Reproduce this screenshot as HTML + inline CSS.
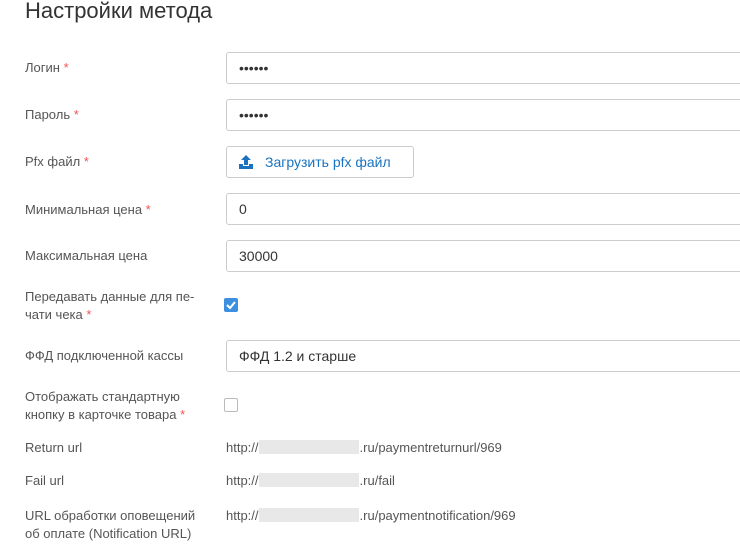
<!DOCTYPE html><html><head><meta charset="utf-8"><style>
body{margin:0;width:740px;height:556px;background:#fff;font-family:"Liberation Sans",sans-serif;position:relative;overflow:hidden}
.a{position:absolute}
h1{position:absolute;left:25px;top:-2px;margin:0;font-weight:normal;font-size:22px;color:#333}
.l{position:absolute;left:25px;font-size:13px;color:#555;line-height:18px}
.s{color:#e55}
.in{position:absolute;left:226px;width:530px;height:30px;border:1px solid #ccc;border-radius:3px;box-sizing:border-box;height:32px;font-size:14px;color:#333;padding-left:12px;line-height:30px}
.u{position:absolute;left:226px;font-size:13px;color:#555}
.b{display:inline-block;width:100px;height:14px;background:#e8e8e8;vertical-align:-2px;margin-right:1px}
</style></head><body>
<h1>Настройки метода</h1>
<div class="l" style="top:59px">Логин <span class="s">*</span></div>
<div class="in" style="top:52px">••••••</div>
<div class="l" style="top:106px">Пароль <span class="s">*</span></div>
<div class="in" style="top:99px">••••••</div>
<div class="l" style="top:153px">Pfx файл <span class="s">*</span></div>
<div class="a" style="left:226px;top:146px;width:188px;height:32px;border:1px solid #ccc;border-radius:3px;box-sizing:border-box;color:#1a73c0;font-size:14px;line-height:30px">
<svg class="a" style="left:11px;top:8px" width="16" height="14" viewBox="0 0 16 14"><path d="M8 0L3 5h3v5h4V5h3z" fill="#1a73c0"/><path d="M1 9h4v2h6V9h4v5H1z" fill="#1a73c0"/></svg>
<span style="position:absolute;left:38px">Загрузить pfx файл</span></div>
<div class="l" style="top:201px">Минимальная цена <span class="s">*</span></div>
<div class="in" style="top:193px">0</div>
<div class="l" style="top:247px">Максимальная цена</div>
<div class="in" style="top:240px">30000</div>
<div class="l" style="top:288px">Передавать данные для пе-<br>чати чека <span class="s">*</span></div>
<div class="a" style="left:224px;top:298px;width:14px;height:14px;background:#3d8fe0;border-radius:2px"><svg width="14" height="14"><path d="M3 7l3 3 5-6" stroke="#fff" stroke-width="2" fill="none"/></svg></div>
<div class="l" style="top:347px">ФФД подключенной кассы</div>
<div class="in" style="top:340px">ФФД 1.2 и старше</div>
<div class="l" style="top:388px">Отображать стандартную<br>кнопку в карточке товара <span class="s">*</span></div>
<div class="a" style="left:224px;top:398px;width:14px;height:14px;border:1px solid #bbb;border-radius:2px;box-sizing:border-box"></div>
<div class="l" style="top:439px">Return url</div>
<div class="u" style="top:440px">http://<span class="b"></span>.ru/paymentreturnurl/969</div>
<div class="l" style="top:472px">Fail url</div>
<div class="u" style="top:473px">http://<span class="b"></span>.ru/fail</div>
<div class="l" style="top:507px">URL обработки оповещений<br>об оплате (Notification URL)</div>
<div class="u" style="top:508px">http://<span class="b"></span>.ru/paymentnotification/969</div>
</body></html>
